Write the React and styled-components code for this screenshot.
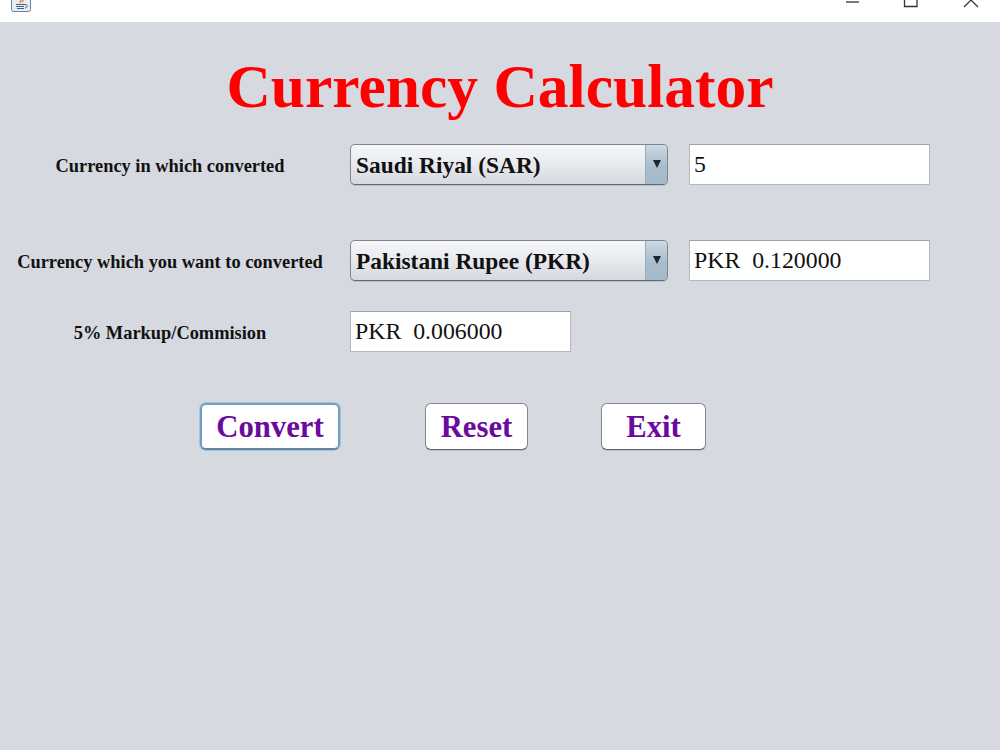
import React from 'react'
import styled, { createGlobalStyle } from 'styled-components'

const GlobalStyle = createGlobalStyle`
  html, body {
    margin: 0;
    height: 100%;
    background: #d6d9e0;
    font-family: "Liberation Serif", "Times New Roman", serif;
  }
`

const Window = styled.div`
  width: 1000px;
  height: 750px;
  overflow: hidden;
  background: #d6d9e0;
`

const TitleBar = styled.div`
  height: 12px;
  padding: 0 21px 10px 10px;
  background: #fff;
  display: flex;
  align-items: flex-end;
  justify-content: space-between;
  overflow: hidden;
`

const Controls = styled.div`
  display: flex;
  align-items: flex-end;
  gap: 44px;
`

const ControlIcon = styled.svg`
  display: block;
  width: 16px;
  height: 16px;
  flex: none;
`

const AppIcon = styled.svg`
  display: block;
  width: 22px;
  height: 20px;
  flex: none;
`

const Title = styled.h1`
  margin: 0;
  padding-top: 28px;
  height: 94px;
  box-sizing: border-box;
  font-size: 61.5px;
  line-height: 72px;
  font-weight: bold;
  text-align: center;
  color: #ff0000;
`

const Row = styled.div`
  display: flex;
  align-items: center;
  height: 41px;
  margin-top: ${p => p.$top}px;
`

const Label = styled.label`
  width: 340px;
  padding-top: 4px;
  font-size: 18.4px;
  font-weight: bold;
  color: #111;
  text-align: center;
  white-space: nowrap;
`

const Combo = styled.div`
  box-sizing: border-box;
  width: 318px;
  height: 41px;
  margin-left: 10px;
  display: flex;
  border: 1px solid #7d8692;
  border-bottom-color: #5f6a78;
  border-radius: 5px;
  overflow: hidden;
  background: linear-gradient(#f6f7f9 0%, #e9ebef 45%, #d5d8df 100%);
  box-shadow: 0 1px 0 #b9bec8;
`

const ComboText = styled.span`
  flex: 1;
  padding-left: 5px;
  font-size: 23.4px;
  font-weight: bold;
  line-height: 41px;
  color: #111;
`

const ComboArrow = styled.span`
  width: 21px;
  display: flex;
  align-items: center;
  justify-content: center;
  background: linear-gradient(#cfd8e2 0%, #a9bccd 55%, #a5b9cb 100%);
  border-left: 1px solid #9aabbc;
  &::after {
    content: '';
    margin-top: -2px;
    border-left: 4px solid transparent;
    border-right: 4px solid transparent;
    border-top: 8px solid #1c2530;
  }
`

const Field = styled.input`
  box-sizing: border-box;
  width: ${p => p.$width}px;
  height: 41px;
  margin-left: ${p => p.$left}px;
  padding: 0 4px;
  border: 1px solid #b4b8bf;
  border-top-color: #9ea2a9;
  border-radius: 0;
  outline: none;
  background: #fff;
  font-family: inherit;
  font-size: 23.8px;
  color: #111;
`

const Buttons = styled.div`
  display: flex;
  align-items: center;
  margin-top: 51px;
  padding-left: 200px;
`

const Action = styled.button`
  box-sizing: border-box;
  width: ${p => p.$width}px;
  height: 47px;
  margin-right: ${p => p.$gap}px;
  padding: 1px 0 0;
  border: ${p => (p.$focused ? '2px solid #6f9dc6' : '1px solid #7f8791')};
  border-bottom-color: ${p => (p.$focused ? '#5f86a8' : '#5d6570')};
  border-radius: 6px;
  background: #fff;
  font-family: inherit;
  font-size: 30.7px;
  font-weight: bold;
  color: #6a0a9e;
  box-shadow: ${p => (p.$focused ? '0 0 0 1px #a9c3da' : '0 1px 0 #b9bec8')};
`

const App = () => (
  <Window>
    <GlobalStyle />
    <TitleBar>
      <AppIcon viewBox="0 0 22 20">
        <rect x="1.5" y="0.5" width="19" height="19" rx="2" fill="#e6ecf3" stroke="#6f8296" />
        <path d="M9.500 11c1.500-1 1.500-2 1-3M12 10c1-.7 1-1.500.7-2" stroke="#e8872e" strokeWidth="1.500" fill="none" />
        <path d="M6 12.500h9M6 14.500h8M7 16.500h7" stroke="#46627f" strokeWidth="1.100" />
        <path d="M15 12.500c3 0 3 3 0 3.500" stroke="#46627f" fill="none" />
      </AppIcon>
      <Controls>
        <ControlIcon viewBox="0 0 16 16">
          <path d="M3 6h13" stroke="#333" strokeWidth="1.300" />
        </ControlIcon>
        <ControlIcon viewBox="0 0 16 16">
          <path d="M1.500 0v10.500h12.500V0" fill="none" stroke="#333" strokeWidth="1.300" />
        </ControlIcon>
        <ControlIcon viewBox="0 0 16 16">
          <path d="M1 -3L15 11M15 -3L1 11" fill="none" stroke="#333" strokeWidth="1.300" />
        </ControlIcon>
      </Controls>
    </TitleBar>
    <Title>Currency Calculator</Title>

    <Row $top={28}>
      <Label>Currency in which converted</Label>
      <Combo>
        <ComboText>Saudi Riyal (SAR)</ComboText>
        <ComboArrow />
      </Combo>
      <Field $width={241} $left={21} readOnly value="5" />
    </Row>

    <Row $top={55}>
      <Label>Currency which you want to converted</Label>
      <Combo>
        <ComboText>Pakistani Rupee (PKR)</ComboText>
        <ComboArrow />
      </Combo>
      <Field $width={241} $left={21} readOnly value="PKR  0.120000" />
    </Row>

    <Row $top={30}>
      <Label>5% Markup/Commision</Label>
      <Field $width={221} $left={10} readOnly value="PKR  0.006000" />
    </Row>

    <Buttons>
      <Action $focused $width={140} $gap={85}>Convert</Action>
      <Action $width={103} $gap={73}>Reset</Action>
      <Action $width={105} $gap={0}>Exit</Action>
    </Buttons>
  </Window>
)

export default App
